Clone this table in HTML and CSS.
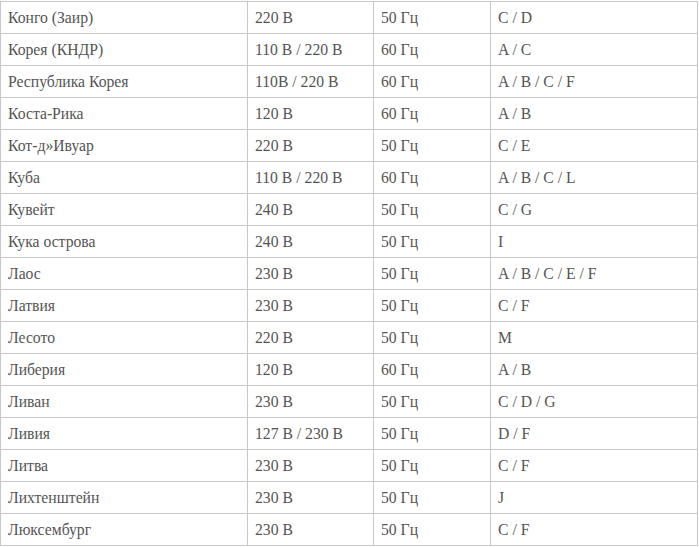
FILE: index.html
```html
<!DOCTYPE html>
<html lang="ru">
<head>
<meta charset="utf-8">
<link rel="stylesheet" href="styles.css">
</head>
<body>
<table class="grid">
<colgroup><col class="c1"><col class="c2"><col class="c3"><col class="c4"></colgroup>
<tbody>
<tr><td>Конго (Заир)</td><td>220 В</td><td>50 Гц</td><td>C / D</td></tr>
<tr><td>Корея (КНДР)</td><td>110 В / 220 В</td><td>60 Гц</td><td>A / C</td></tr>
<tr><td>Республика Корея</td><td>110В / 220 В</td><td>60 Гц</td><td>A / B / C / F</td></tr>
<tr><td>Коста-Рика</td><td>120 В</td><td>60 Гц</td><td>A / B</td></tr>
<tr><td>Кот-д»Ивуар</td><td>220 В</td><td>50 Гц</td><td>C / E</td></tr>
<tr><td>Куба</td><td>110 В / 220 В</td><td>60 Гц</td><td>A / B / C / L</td></tr>
<tr><td>Кувейт</td><td>240 В</td><td>50 Гц</td><td>C / G</td></tr>
<tr><td>Кука острова</td><td>240 В</td><td>50 Гц</td><td>I</td></tr>
<tr><td>Лаос</td><td>230 В</td><td>50 Гц</td><td>A / B / C / E / F</td></tr>
<tr><td>Латвия</td><td>230 В</td><td>50 Гц</td><td>C / F</td></tr>
<tr><td>Лесото</td><td>220 В</td><td>50 Гц</td><td>M</td></tr>
<tr><td>Либерия</td><td>120 В</td><td>60 Гц</td><td>A / B</td></tr>
<tr><td>Ливан</td><td>230 В</td><td>50 Гц</td><td>C / D / G</td></tr>
<tr><td>Ливия</td><td>127 В / 230 В</td><td>50 Гц</td><td>D / F</td></tr>
<tr><td>Литва</td><td>230 В</td><td>50 Гц</td><td>C / F</td></tr>
<tr><td>Лихтенштейн</td><td>230 В</td><td>50 Гц</td><td>J</td></tr>
<tr><td>Люксембург</td><td>230 В</td><td>50 Гц</td><td>C / F</td></tr>
</tbody>
</table>
</body>
</html>
```
FILE: styles.css
```css
html, body {
  margin: 0;
  padding: 0;
  background: #ffffff;
}
body {
  padding-top: 1px;
}
.grid {
  border-collapse: collapse;
  table-layout: fixed;
  width: 697px;
  font-family: "Liberation Serif", "Times New Roman", serif;
  font-size: 15.7px;
  color: #555555;
}
.c1 { width: 247px; }
.c2 { width: 126px; }
.c3 { width: 117px; }
.c4 { width: 207px; }
.grid td {
  border: 1px solid #c8c8c8;
  height: 32px;
  padding: 0 0 0 7px;
  box-sizing: border-box;
  vertical-align: middle;
  white-space: nowrap;
}
```
